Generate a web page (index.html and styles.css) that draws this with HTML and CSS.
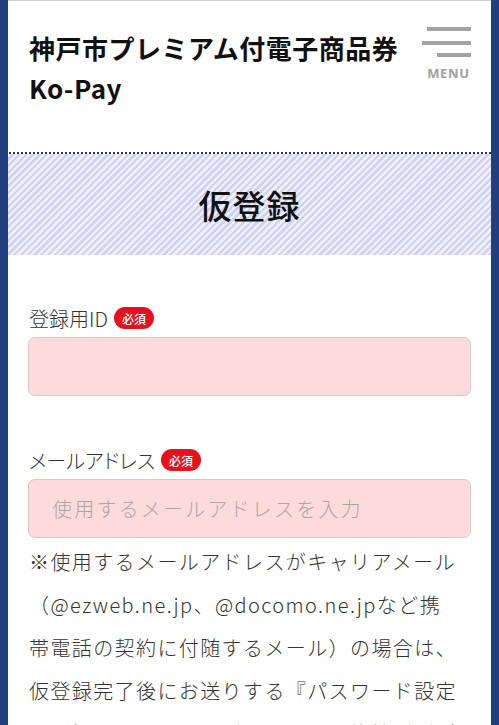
FILE: index.html
```html
<!DOCTYPE html>
<html lang="ja">
<head>
<meta charset="utf-8">
<title>仮登録</title>
<link rel="stylesheet" href="styles.css">
</head>
<body>
<div class="page">
  <header class="header">
    <h1 class="site-title">神戸市プレミアム付電子商品券<br>Ko-Pay</h1>
    <div class="menu">
      <span class="bar bar-1"></span>
      <span class="bar bar-2"></span>
      <span class="bar bar-3"></span>
      <span class="menu-label">MENU</span>
    </div>
  </header>
  <div class="dots"></div>
  <div class="band">
    <h2 class="page-title">仮登録</h2>
  </div>
  <main class="form">
    <div class="field">
      <div class="label">登録用ID<span class="badge">必須</span></div>
      <div class="input"></div>
    </div>
    <div class="field field-mail">
      <div class="label">メールアドレス<span class="badge">必須</span></div>
      <div class="input"><span class="placeholder">使用するメールアドレスを入力</span></div>
    </div>
    <p class="note">※使用するメールアドレスがキャリアメール<br>（@ezweb.ne.jp、@docomo.ne.jpなど携<br>帯電話の契約に付随するメール）の場合は、<br>仮登録完了後にお送りする『パスワード設定<br>のお知らせ』メールが届かない可能性がござ</p>
  </main>
</div>
</body>
</html>
```
FILE: styles.css
```css
html {
  background: #213f7c;
}
body {
  margin: 0;
  font-family: "Noto Sans CJK JP", "Noto Sans", sans-serif;
  color: #222;
}
.page {
  margin: 0 8px;
  background: #fff;
  border-top: 1px solid #d0d0d0;
  height: 724px;
  overflow: hidden;
}
.header {
  display: flex;
  justify-content: space-between;
  align-items: flex-start;
  padding: 27px 20px 44px 21px;
}
.site-title {
  margin: 0;
  font-size: 26px;
  line-height: 40px;
  font-weight: 700;
  color: #111;
  letter-spacing: 0.5px;
}
.menu {
  width: 49px;
  display: flex;
  flex-direction: column;
  align-items: flex-end;
  margin-top: -1px;
}
.bar {
  display: block;
  height: 4px;
  background: #a3a3a3;
}
.bar-1 { width: 44px; }
.bar-2 { width: 49px; margin-top: 10px; }
.bar-3 { width: 34px; margin-top: 8px; }
.menu-label {
  margin-top: 8px;
  font-family: "Noto Sans", sans-serif;
  font-size: 13px;
  line-height: 16px;
  font-weight: 700;
  color: #a0a0a0;
  letter-spacing: 0.7px;
  align-self: center;
  margin-left: 4px;
}
.dots {
  height: 2px;
  background: repeating-linear-gradient(to right, #24356a 0 2px, transparent 2px 4px);
  margin-left: 1px;
}
.band {
  height: 101px;
  display: flex;
  align-items: center;
  justify-content: center;
  background: repeating-linear-gradient(-45deg, #cfd2f1 0 2.4px, #eff0fb 2.4px 4.8px);
}
.page-title {
  margin: 0;
  font-size: 33px;
  font-weight: 500;
  color: #111;
  letter-spacing: 1px;
}
.form {
  padding: 49px 20px 0 20px;
}
.field-mail {
  margin-top: 50px;
}
.label {
  display: flex;
  align-items: center;
  height: 28px;
  font-size: 20px;
  font-weight: 300;
  color: #333;
  padding-left: 1px;
  font-feature-settings: "palt";
}
.badge {
  display: inline-flex;
  align-items: center;
  justify-content: center;
  height: 22px;
  padding: 0 8px;
  margin-left: 6px;
  border-radius: 11px;
  background: #e8101c;
  color: #fff;
  font-size: 12px;
  font-weight: 500;
}
.input {
  margin-top: 5px;
  height: 57px;
  border: 1px solid #d8c8c8;
  border-radius: 7px;
  background: #fedbdb;
  display: flex;
  align-items: center;
  padding-left: 23px;
}
.placeholder {
  font-size: 20px;
  font-weight: 300;
  color: #ada5a5;
  letter-spacing: 2.2px;
}
.note {
  margin: 2px 0 0 0;
  font-size: 20px;
  font-weight: 300;
  line-height: 43px;
  letter-spacing: 1.4px;
  color: #333;
  white-space: nowrap;
  padding-left: 1px;
}
```
